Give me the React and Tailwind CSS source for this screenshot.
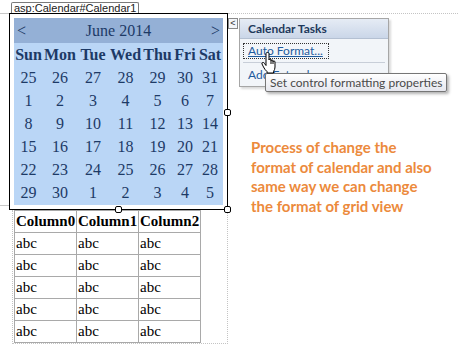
import React from "react";

const weeks = [
  [25, 26, 27, 28, 29, 30, 31],
  [1, 2, 3, 4, 5, 6, 7],
  [8, 9, 10, 11, 12, 13, 14],
  [15, 16, 17, 18, 19, 20, 21],
  [22, 23, 24, 25, 26, 27, 28],
  [29, 30, 1, 2, 3, 4, 5],
];
const days = ["Sun", "Mon", "Tue", "Wed", "Thu", "Fri", "Sat"];

function Handle({ cls }) {
  return (
    <div
      className={`absolute w-[7px] h-[7px] rounded-[2px] border border-black bg-white ${cls}`}
    />
  );
}

function HandCursor() {
  return (
    <svg width="17" height="22" viewBox="0 0 17 22" className="absolute left-[261px] top-[52px]">
      <path
        d="M5 1.5 Q5 0.5 6.5 0.5 Q8 0.5 8 1.5 V8 Q8 7 9 7 Q10 7 10 8 V8.8 Q10 8 11 8 Q12 8 12 9 V9.8 Q12 9 13 9 Q14 9 14 10 V15 Q14 17.5 12.5 19.5 V21 H6 V19.5 Q4 18 2.5 15 L1 12 Q0.6 10.8 1.6 10.5 Q2.6 10.2 3.4 11.4 L5 13.5 Z"
        fill="#fff"
        stroke="#000"
        strokeWidth="1"
        strokeLinejoin="round"
      />
      <path d="M10 8.5 V12 M12 9.5 V12" stroke="#000" strokeWidth="1" fill="none" />
    </svg>
  );
}

export default function App() {
  return (
    <div className="relative w-[458px] h-[346px] overflow-hidden bg-white font-['Liberation_Serif',serif]">
      {/* tag */}
      <div className="h-[13px] pt-[2px] pl-[11px] flex">
        <div className="h-[11px] border-x border-t border-[#7a7a7a] rounded-t-[2px] px-[2px] text-[11px] leading-[11px] text-[#222] font-['Liberation_Sans',sans-serif] bg-white">
          asp:Calendar#Calendar1
        </div>
      </div>

      <div className="flex">
        {/* left gutter */}
        <div className="w-[9px] h-[193px] border-t border-b border-[#c8c8c8]" />

        {/* left column */}
        <div className="w-[219px] flex flex-col">
          <div className="relative w-[219px] h-[197px] border border-black pt-[4px] pl-[4px]">
            <div className="w-[209px] h-[187px] bg-[#bad6f6] text-[#1d3a66]">
              <div className="h-[25px] bg-[#94b0d6] flex items-center justify-between px-[3px] text-[16px]">
                <span>&lt;</span>
                <span>June 2014</span>
                <span>&gt;</span>
              </div>
              <div className="grid grid-cols-[29px_34px_32px_33px_31px_24px_26px]">
                {days.map((d) => (
                  <div key={d} className="h-[23px] flex items-center justify-center font-bold text-[16px]">
                    {d}
                  </div>
                ))}
                {weeks.flat().map((n, i) => (
                  <div key={i} className="h-[23px] flex items-center justify-center text-[16px]">
                    {n}
                  </div>
                ))}
              </div>
            </div>
            <Handle cls="right-[-4px] top-[95px]" />
            <Handle cls="left-[105px] bottom-[-4px]" />
            <Handle cls="right-[-4px] bottom-[-4px]" />
          </div>

          {/* grid view */}
          <div className="ml-[3px] w-[216px] h-[134px] border-l border-r border-b border-dotted border-[#c4c4c4]">
            <div className="ml-[1px] w-[187px] grid grid-cols-[62px_62px_62px] border-l border-t border-[#a9a9a9] text-black">
              {["Column0", "Column1", "Column2"].map((c) => (
                <div key={c} className="h-[22px] border-r border-b border-[#a9a9a9] flex items-center pl-[1px] font-bold text-[15px]">
                  {c}
                </div>
              ))}
              {Array.from({ length: 15 }).map((_, i) => (
                <div key={i} className="h-[22px] border-r border-b border-[#a9a9a9] flex items-center pl-[1px] text-[15px]">
                  abc
                </div>
              ))}
            </div>
          </div>
        </div>

        {/* right column */}
        <div className="flex-1 flex flex-col border-t border-dotted border-[#c4c4c4]">
          <div className="flex pt-[4px] items-start">
            <div className="w-[10px] h-[11px] border border-[#8a8a8a] bg-[#f4f6f9] flex items-center justify-center text-[9px] leading-[9px] text-[#333] font-['Liberation_Sans',sans-serif]">
              &lt;
            </div>
            <div className="ml-[1px] w-[150px] h-[69px] border border-[#a6a6a6] bg-[#f2f5f9] shadow-[2px_2px_2px_rgba(0,0,0,0.15)] font-['Lato',sans-serif] text-[12px]">
              <div className="h-[20px] bg-gradient-to-b from-[#e6ecf5] to-[#cad6e8] border-b border-[#b4c0d2] flex items-center pl-[8px] font-bold text-[#1e395b]">
                Calendar Tasks
              </div>
              <div className="px-[3px] pt-[4px]">
                <div className="w-[86px] h-[16px] border border-dotted border-[#333] flex items-center pl-[4px] text-[#1f5b9d] underline">
                  Auto Format...
                </div>
                <div className="mt-[3px] h-px bg-[#c8ced8]" />
                <div className="pl-[5px] pt-[3px] text-[#1f5b9d]">Add Extender...</div>
              </div>
            </div>
          </div>

          <div className="mt-[51px] ml-[23px] font-['Lato',sans-serif] font-bold text-[15px] leading-[19.5px] text-[#ec8a3c]">
            Process of change the
            <br />
            format of calendar and also
            <br />
            same way we can change
            <br />
            the format of grid view
          </div>
        </div>
      </div>

      {/* tooltip */}
      <div className="absolute left-[265px] top-[73px] w-[182px] h-[19px] border border-[#767676] rounded-[2px] bg-gradient-to-b from-white to-[#e6e7ee] shadow-[2px_2px_3px_rgba(0,0,0,0.3)] flex items-center pl-[4px] font-['Lato',sans-serif] text-[12px] text-[#4a4a4a]">
        Set control formatting properties
      </div>

      <HandCursor />
    </div>
  );
}
